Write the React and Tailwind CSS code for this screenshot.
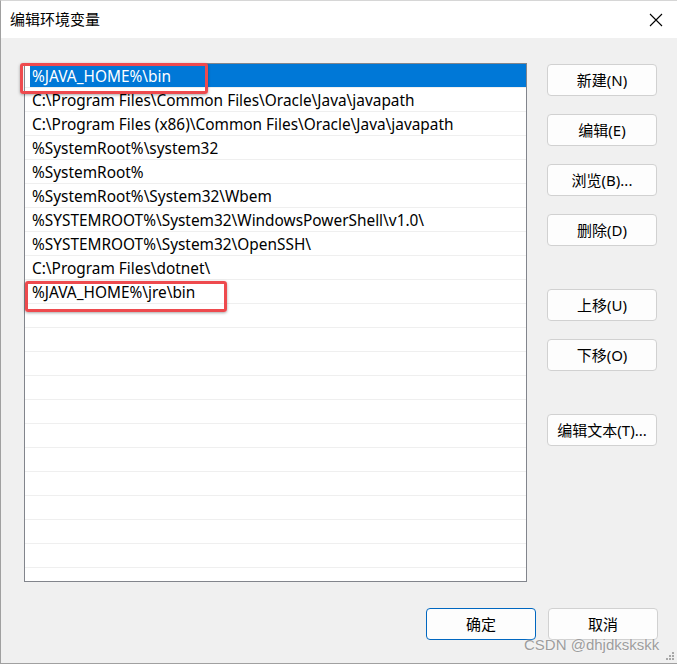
import React from 'react';

const paths = [
  '%JAVA_HOME%\\bin',
  'C:\\Program Files\\Common Files\\Oracle\\Java\\javapath',
  'C:\\Program Files (x86)\\Common Files\\Oracle\\Java\\javapath',
  '%SystemRoot%\\system32',
  '%SystemRoot%',
  '%SystemRoot%\\System32\\Wbem',
  '%SYSTEMROOT%\\System32\\WindowsPowerShell\\v1.0\\',
  '%SYSTEMROOT%\\System32\\OpenSSH\\',
  'C:\\Program Files\\dotnet\\',
  '%JAVA_HOME%\\jre\\bin',
];

const font = { fontFamily: '"Segoe UI", "Noto Sans", "Noto Sans CJK SC", sans-serif' };

const Btn = ({ children, primary = false, className = '' }) => (
  <button
    className={`w-[110px] h-[32px] rounded-[4px] bg-[#fdfdfd] text-[15px] text-black flex items-center justify-center ${
      primary ? 'border border-[#0067c0]' : 'border border-[#d1d1d1]'
    } ${className}`}
  >
    {children}
  </button>
);

const Row = ({ text, selected }) => (
  <div className="h-[24px] shrink-0 border-b border-[#efefef] flex">
    <div className={`flex-1 flex items-center pl-[2px] pt-[2px] ml-[5px] ${selected ? 'bg-[#0078d7] text-white' : 'text-black'}`}>
      <span className="text-[15.4px] leading-none whitespace-nowrap">{text}</span>
    </div>
  </div>
);

export default function App() {
  const rows = [...paths, ...Array(12).fill('')];

  return (
    <div className="relative w-[677px] h-[664px] bg-[#f0f0f0] border-l border-b border-t border-[#a0a0a0] border-t-[#d6d6d6] overflow-hidden" style={font}>
      {/* title bar */}
      <div className="h-[37px] bg-white flex items-center justify-between pl-[9px] pr-[14px]">
        <span className="text-[15px] text-black">编辑环境变量</span>
        <svg width="14" height="14" viewBox="0 0 14 14" className="text-black">
          <path d="M1 1L13 13M13 1L1 13" stroke="currentColor" strokeWidth="1.1" fill="none" />
        </svg>
      </div>

      <div className="flex pt-[25px] pl-[23px]">
        {/* list */}
        <div className="w-[503px] h-[519px] bg-white border border-[#82858c] flex flex-col overflow-hidden">
          {rows.map((t, i) => (
            <Row key={i} text={t} selected={i === 0} />
          ))}
        </div>

        {/* side buttons */}
        <div className="flex flex-col ml-[20px] pt-px">
          <Btn>新建(N)</Btn>
          <Btn className="mt-[18px]">编辑(E)</Btn>
          <Btn className="mt-[18px]">浏览(B)...</Btn>
          <Btn className="mt-[18px]">删除(D)</Btn>
          <Btn className="mt-[43px]">上移(U)</Btn>
          <Btn className="mt-[18px]">下移(O)</Btn>
          <Btn className="mt-[43px]">编辑文本(T)...</Btn>
        </div>
      </div>

      {/* bottom buttons */}
      <div className="flex justify-end gap-[12px] pr-[19px] mt-[26px]">
        <Btn primary>确定</Btn>
        <Btn>取消</Btn>
      </div>

      {/* annotation boxes */}
      <div className="absolute left-[19px] top-[62px] w-[188px] h-[31px] border-[3px] border-[#ee4a4e] rounded-[3px] shadow-[0_1px_3px_rgba(0,0,0,0.35)]" />
      <div className="absolute left-[24px] top-[280px] w-[202px] h-[31px] border-[3px] border-[#ee4a4e] rounded-[3px] shadow-[0_1px_3px_rgba(0,0,0,0.35)]" />

      {/* watermark */}
      <div
        className="absolute left-[523px] top-[636px] text-[15px] text-[#9d9d9d] leading-none whitespace-nowrap [text-shadow:0_0_2px_rgba(255,255,255,0.9)]"
        style={{ fontFamily: '"Liberation Sans", Arial, sans-serif' }}
      >
        CSDN @dhjdkskskk
      </div>

      {/* resize grip */}
      <svg className="absolute right-[2px] bottom-[2px]" width="10" height="10" viewBox="0 0 10 10">
        <rect x="7" y="1" width="2" height="2" fill="#a8a8a8" />
        <rect x="4" y="4" width="2" height="2" fill="#a8a8a8" />
        <rect x="7" y="4" width="2" height="2" fill="#a8a8a8" />
        <rect x="1" y="7" width="2" height="2" fill="#a8a8a8" />
        <rect x="4" y="7" width="2" height="2" fill="#a8a8a8" />
        <rect x="7" y="7" width="2" height="2" fill="#a8a8a8" />
      </svg>
    </div>
  );
}
